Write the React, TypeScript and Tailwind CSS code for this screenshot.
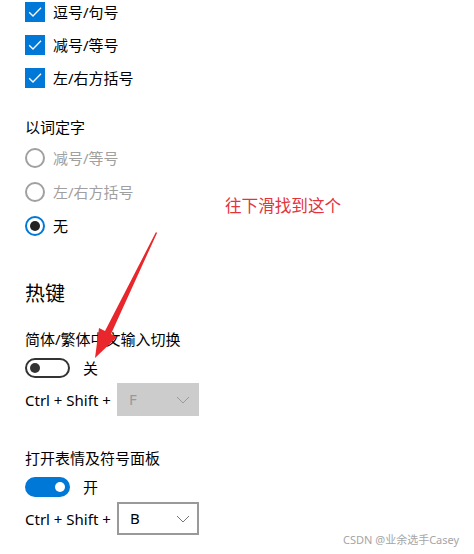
import React from "react";

function CheckRow({ label }: { label: string }) {
  return (
    <div className="flex h-[20px] items-center">
      <div className="flex h-[20px] w-[20px] items-center justify-center bg-[#0078d7]">
        <svg width="20" height="20" viewBox="0 0 20 20">
          <path d="M4.2 10.2 L8 14 L16 5.8" fill="none" stroke="#fff" strokeWidth="1.3" />
        </svg>
      </div>
      <span className="ml-[8px] text-[15px] leading-[20px] text-black">{label}</span>
    </div>
  );
}

function RadioRow({ label, selected, disabled }: { label: string; selected?: boolean; disabled?: boolean }) {
  return (
    <div className="flex h-[20px] items-center">
      {selected ? (
        <div className="flex h-[20px] w-[20px] items-center justify-center rounded-full border-2 border-[#0078d7]">
          <div className="h-[10px] w-[10px] rounded-full bg-[#222]" />
        </div>
      ) : (
        <div className="h-[20px] w-[20px] rounded-full border-2 border-[#a0a0a0]" />
      )}
      <span className={"ml-[8px] text-[15px] leading-[20px] " + (disabled ? "text-[#a0a0a0]" : "text-black")}>{label}</span>
    </div>
  );
}

function Toggle({ on }: { on: boolean }) {
  return (
    <div className="flex h-[20px] items-center">
      {on ? (
        <div className="flex h-[20px] w-[45px] items-center justify-end rounded-full bg-[#0078d7] pr-[5px]">
          <div className="h-[10px] w-[10px] rounded-full bg-white" />
        </div>
      ) : (
        <div className="flex h-[20px] w-[45px] items-center rounded-full border-2 border-[#333] pl-[3px]">
          <div className="h-[10px] w-[10px] rounded-full bg-[#333]" />
        </div>
      )}
      <span className="ml-[13px] text-[15px] leading-[20px] text-black">{on ? "开" : "关"}</span>
    </div>
  );
}

function Chevron({ color }: { color: string }) {
  return (
    <svg width="14" height="8" viewBox="0 0 14 8">
      <path d="M1 1 L7 7 L13 1" fill="none" stroke={color} strokeWidth="1" />
    </svg>
  );
}

function KeyRow({ keyName, disabled }: { keyName: string; disabled?: boolean }) {
  return (
    <div className="flex h-[33px] items-center">
      <span className="w-[92px] text-[15px] leading-[20px] text-black">Ctrl + Shift +</span>
      {disabled ? (
        <div className="flex h-[33px] w-[82px] items-center justify-between bg-[#cccccc] pl-[12px] pr-[9px]">
          <span className="text-[15px] text-[#999]">{keyName}</span>
          <Chevron color="#999" />
        </div>
      ) : (
        <div className="flex h-[33px] w-[82px] items-center justify-between border-2 border-[#999] bg-white pl-[11px] pr-[7px]">
          <span className="text-[15px] text-black">{keyName}</span>
          <Chevron color="#777" />
        </div>
      )}
    </div>
  );
}

export default function App() {
  return (
    <div
      className="relative h-[554px] w-[474px] overflow-hidden bg-white"
      style={{ fontFamily: "'Noto Sans', 'Noto Sans CJK SC', sans-serif" }}
    >
      <div className="flex flex-col pl-[25px] pt-[2px]">
        <div className="flex flex-col gap-[13px]">
          <CheckRow label="逗号/句号" />
          <CheckRow label="减号/等号" />
          <CheckRow label="左/右方括号" />
        </div>
        <div className="mt-[29px] flex h-[20px] items-center text-[15px] text-black">以词定字</div>
        <div className="mt-[11px] flex flex-col gap-[14px]">
          <RadioRow label="减号/等号" disabled />
          <RadioRow label="左/右方括号" disabled />
          <RadioRow label="无" selected />
        </div>
        <div className="mt-[44px] flex h-[28px] items-center text-[20px] text-black">热键</div>
        <div className="mt-[21px] flex h-[20px] items-center text-[15px] text-black">简体/繁体中文输入切换</div>
        <div className="mt-[9px]">
          <Toggle on={false} />
        </div>
        <div className="mt-[5px]">
          <KeyRow keyName="F" disabled />
        </div>
        <div className="mt-[32px] flex h-[20px] items-center text-[15px] text-black">打开表情及符号面板</div>
        <div className="mt-[9px]">
          <Toggle on={true} />
        </div>
        <div className="mt-[5px]">
          <KeyRow keyName="B" />
        </div>
      </div>

      <div className="absolute left-[225px] top-[196px] text-[16.6px] leading-[20px] text-[#e4333b]">往下滑找到这个</div>

      <svg className="absolute left-0 top-0" width="474" height="554" viewBox="0 0 474 554">
        <polygon points="156,232 157,233 111,334 117,337 95,358 99,328 105,331" fill="#e8262b" />
      </svg>

      <div className="absolute left-[343px] top-[532px] text-[11px] leading-[16px] text-[#a5a5a5]">CSDN @业余选手Casey</div>
    </div>
  );
}
